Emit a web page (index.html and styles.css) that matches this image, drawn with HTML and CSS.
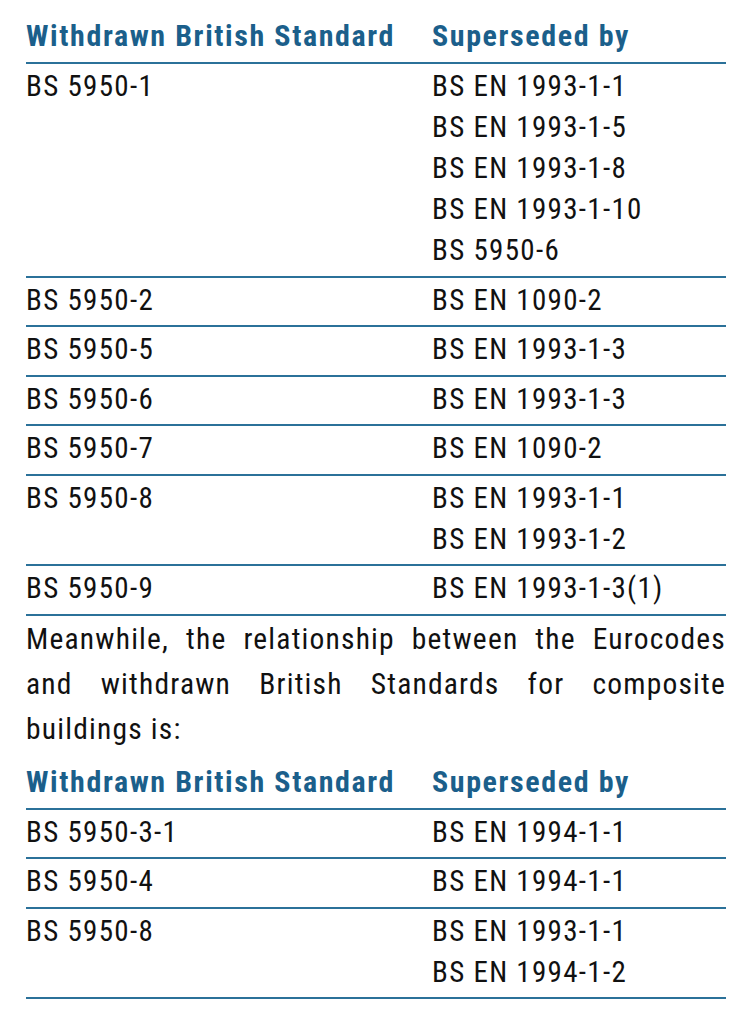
FILE: index.html
```html
<!DOCTYPE html>
<html lang="en">
<head>
<meta charset="utf-8">
<title>Withdrawn British Standards</title>
<link rel="stylesheet" href="styles.css">
</head>
<body>
<main class="page">
  <section class="table">
    <div class="row head">
      <div class="cell">Withdrawn British Standard</div>
      <div class="cell">Superseded by</div>
    </div>
    <div class="row">
      <div class="cell">BS 5950-1</div>
      <div class="cell">BS EN 1993-1-1<br>BS EN 1993-1-5<br>BS EN 1993-1-8<br>BS EN 1993-1-10<br>BS 5950-6</div>
    </div>
    <div class="row">
      <div class="cell">BS 5950-2</div>
      <div class="cell">BS EN 1090-2</div>
    </div>
    <div class="row">
      <div class="cell">BS 5950-5</div>
      <div class="cell">BS EN 1993-1-3</div>
    </div>
    <div class="row">
      <div class="cell">BS 5950-6</div>
      <div class="cell">BS EN 1993-1-3</div>
    </div>
    <div class="row">
      <div class="cell">BS 5950-7</div>
      <div class="cell">BS EN 1090-2</div>
    </div>
    <div class="row">
      <div class="cell">BS 5950-8</div>
      <div class="cell">BS EN 1993-1-1<br>BS EN 1993-1-2</div>
    </div>
    <div class="row">
      <div class="cell">BS 5950-9</div>
      <div class="cell">BS EN 1993-1-3(1)</div>
    </div>
  </section>

  <p class="text">Meanwhile, the relationship between the Eurocodes and withdrawn British Standards for composite buildings is:</p>

  <section class="table">
    <div class="row head">
      <div class="cell">Withdrawn British Standard</div>
      <div class="cell">Superseded by</div>
    </div>
    <div class="row">
      <div class="cell">BS 5950-3-1</div>
      <div class="cell">BS EN 1994-1-1</div>
    </div>
    <div class="row">
      <div class="cell">BS 5950-4</div>
      <div class="cell">BS EN 1994-1-1</div>
    </div>
    <div class="row">
      <div class="cell">BS 5950-8</div>
      <div class="cell">BS EN 1993-1-1<br>BS EN 1994-1-2</div>
    </div>
  </section>
</main>
</body>
</html>
```
FILE: styles.css
```css
html, body {
  margin: 0;
  padding: 0;
  background: #ffffff;
}
body {
  font-family: Roboto, "Liberation Sans", sans-serif;
  font-stretch: 80%;
  color: #111111;
}
.page {
  width: 700px;
  padding: 15px 0 0 26px;
}
.row {
  display: grid;
  grid-template-columns: 406px 1fr;
  border-bottom: 2px solid #2b7199;
  font-size: 29px;
  line-height: 41px;
  letter-spacing: 1.3px;
  padding: 2px 0 4.5px;
}
.row.head {
  font-weight: 700;
  font-size: 30px;
  font-stretch: 85%;
  letter-spacing: 1.6px;
  color: #1b5f8b;
  padding: 0 0 6px;
}
.text {
  margin: 0;
  padding: 1px 0 9px;
  font-size: 29.5px;
  line-height: 45px;
  letter-spacing: 1.2px;
  text-align: justify;
}
```
